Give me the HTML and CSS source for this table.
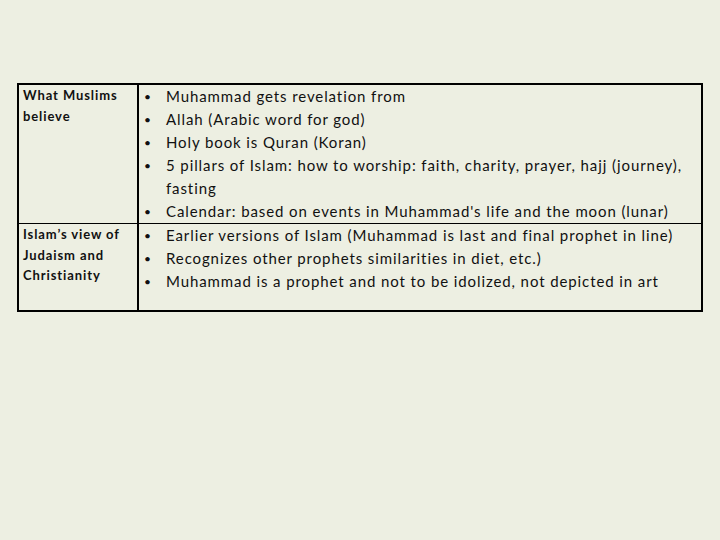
FILE: index.html
```html
<!DOCTYPE html>
<html>
<head>
<meta charset="utf-8">
<link rel="stylesheet" href="styles.css">
</head>
<body>
<div class="sheet">
  <div class="grid">
    <div class="head">What Muslims believe</div>
    <div class="body">
      <ul class="list">
        <li><span class="dot">•</span><span>Muhammad gets revelation from</span></li>
        <li><span class="dot">•</span><span>Allah (Arabic word for god)</span></li>
        <li><span class="dot">•</span><span>Holy book is Quran (Koran)</span></li>
        <li><span class="dot">•</span><span>5 pillars of Islam: how to worship: faith, charity, prayer, hajj (journey), fasting</span></li>
        <li><span class="dot">•</span><span>Calendar: based on events in Muhammad's life and the moon (lunar)</span></li>
      </ul>
    </div>
    <div class="head second">Islam’s view of Judaism and Christianity</div>
    <div class="body second">
      <ul class="list">
        <li><span class="dot">•</span><span>Earlier versions of Islam (Muhammad is last and final prophet in line)</span></li>
        <li><span class="dot">•</span><span>Recognizes other prophets similarities in diet, etc.)</span></li>
        <li><span class="dot">•</span><span>Muhammad is a prophet and not to be idolized, not depicted in art</span></li>
      </ul>
    </div>
  </div>
</div>
</body>
</html>
```

FILE: styles.css
```css
html, body {
  margin: 0;
  padding: 0;
  background: #edefe2;
}
body {
  width: 720px;
  height: 540px;
  font-family: Lato, "Liberation Sans", sans-serif;
  color: #111;
}
.sheet {
  padding: 83px 0 0 17px;
}
.grid {
  width: 682px;
  border: 2px solid #000;
  display: grid;
  grid-template-columns: 120px 1fr;
  grid-template-rows: 138px 87px;
}
.head {
  border-right: 2px solid #000;
  padding: 0 4px 0 4px;
  font-weight: bold;
  font-size: 13px;
  letter-spacing: 0.9px;
  line-height: 20.5px;
}
.second {
  border-top: 1.5px solid #000;
}
.body {
  padding: 0 0 0 5px;
}
.list {
  list-style: none;
  margin: 0;
  padding: 0;
  font-size: 15px;
  letter-spacing: 0.9px;
  line-height: 23px;
  width: 540px;
}
.list li {
  display: grid;
  grid-template-columns: 22px 1fr;
}
.dot {
  font-size: 12px;
}
```
